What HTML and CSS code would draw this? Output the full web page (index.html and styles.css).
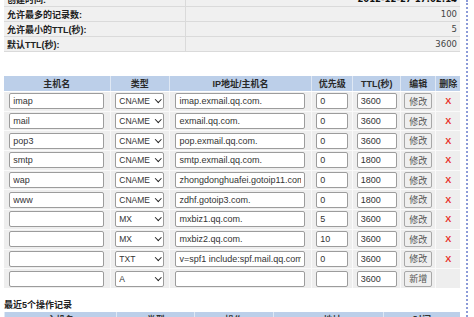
FILE: index.html
```html
<!DOCTYPE html>
<html lang="zh-CN">
<head>
    <meta charset="UTF-8">
    <title>域名解析</title>
    <link rel="stylesheet" href="styles.css">
</head>
<body>
    <div class="page">
        <table class="info">
            <tr><td class="label">创建时间:</td><td class="value date">2012-12-27 17:02:14</td></tr>
            <tr><td class="label">允许最多的记录数:</td><td class="value">100</td></tr>
            <tr><td class="label">允许最小的TTL(秒):</td><td class="value">5</td></tr>
            <tr><td class="label">默认TTL(秒):</td><td class="value">3600</td></tr>
        </table>

        <table class="records">
            <colgroup>
                <col style="width:106px"><col style="width:59px"><col style="width:142px"><col style="width:41px"><col style="width:48px"><col style="width:35px"><col style="width:24px">
            </colgroup>
            <tr>
                <th>主机名</th><th>类型</th><th>IP地址/主机名</th><th>优先级</th><th>TTL(秒)</th><th>编辑</th><th>删除</th>
            </tr>
            <tr>
                <td><input class="host" value="imap"></td>
                <td><span class="pick"><select><option>CNAME</option></select></span></td>
                <td><input class="ip" value="imap.exmail.qq.com."></td>
                <td><input class="pri" value="0"></td>
                <td><input class="ttl" value="3600"></td>
                <td><button>修改</button></td>
                <td><span class="del">X</span></td>
            </tr>
            <tr>
                <td><input class="host" value="mail"></td>
                <td><span class="pick"><select><option>CNAME</option></select></span></td>
                <td><input class="ip" value="exmail.qq.com."></td>
                <td><input class="pri" value="0"></td>
                <td><input class="ttl" value="3600"></td>
                <td><button>修改</button></td>
                <td><span class="del">X</span></td>
            </tr>
            <tr>
                <td><input class="host" value="pop3"></td>
                <td><span class="pick"><select><option>CNAME</option></select></span></td>
                <td><input class="ip" value="pop.exmail.qq.com."></td>
                <td><input class="pri" value="0"></td>
                <td><input class="ttl" value="3600"></td>
                <td><button>修改</button></td>
                <td><span class="del">X</span></td>
            </tr>
            <tr>
                <td><input class="host" value="smtp"></td>
                <td><span class="pick"><select><option>CNAME</option></select></span></td>
                <td><input class="ip" value="smtp.exmail.qq.com."></td>
                <td><input class="pri" value="0"></td>
                <td><input class="ttl" value="1800"></td>
                <td><button>修改</button></td>
                <td><span class="del">X</span></td>
            </tr>
            <tr>
                <td><input class="host" value="wap"></td>
                <td><span class="pick"><select><option>CNAME</option></select></span></td>
                <td><input class="ip" value="zhongdonghuafei.gotoip11.com."></td>
                <td><input class="pri" value="0"></td>
                <td><input class="ttl" value="1800"></td>
                <td><button>修改</button></td>
                <td><span class="del">X</span></td>
            </tr>
            <tr>
                <td><input class="host" value="www"></td>
                <td><span class="pick"><select><option>CNAME</option></select></span></td>
                <td><input class="ip" value="zdhf.gotoip3.com."></td>
                <td><input class="pri" value="0"></td>
                <td><input class="ttl" value="1800"></td>
                <td><button>修改</button></td>
                <td><span class="del">X</span></td>
            </tr>
            <tr>
                <td><input class="host" value=""></td>
                <td><span class="pick"><select><option>MX</option></select></span></td>
                <td><input class="ip" value="mxbiz1.qq.com."></td>
                <td><input class="pri" value="5"></td>
                <td><input class="ttl" value="3600"></td>
                <td><button>修改</button></td>
                <td><span class="del">X</span></td>
            </tr>
            <tr>
                <td><input class="host" value=""></td>
                <td><span class="pick"><select><option>MX</option></select></span></td>
                <td><input class="ip" value="mxbiz2.qq.com."></td>
                <td><input class="pri" value="10"></td>
                <td><input class="ttl" value="3600"></td>
                <td><button>修改</button></td>
                <td><span class="del">X</span></td>
            </tr>
            <tr>
                <td><input class="host" value=""></td>
                <td><span class="pick"><select><option>TXT</option></select></span></td>
                <td><input class="ip" value="v=spf1 include:spf.mail.qq.com ~all"></td>
                <td><input class="pri" value="0"></td>
                <td><input class="ttl" value="3600"></td>
                <td><button>修改</button></td>
                <td><span class="del">X</span></td>
            </tr>
            <tr>
                <td><input class="host" value=""></td>
                <td><span class="pick"><select><option>A</option></select></span></td>
                <td><input class="ip" value=""></td>
                <td><input class="pri" value=""></td>
                <td><input class="ttl" value="3600"></td>
                <td><button>新增</button></td>
                <td></td>
            </tr>
        </table>

        <h3 class="section-title">最近5个操作记录</h3>
        <table class="log">
            <tr><th>主机名</th><th>类型</th><th>操作</th><th>IP地址</th><th>时间</th></tr>
        </table>
    </div>
</body>
</html>
```

FILE: styles.css
```css
* {
    box-sizing: border-box;
}

body {
    margin: 0;
    background: white;
    font-family: "Liberation Sans", "Noto Sans CJK SC", sans-serif;
    font-size: 9px;
    color: #222;
    overflow: hidden;
}

.page {
    width: 468px;
    height: 317px;
    padding-left: 4px;
    border-right: 2px dotted #8c9bd8;
    overflow: hidden;
}

/* domain info */
.info {
    width: 456px;
    margin-top: -9px;
    border-collapse: collapse;
    background: #f0f0f0;
}

.info td {
    height: 15px;
    padding: 0 3px;
    border: 1px solid #dadada;
    border-left: none;
    border-right: none;
}

.info .label {
    width: 181px;
    font-weight: bold;
    border-right: 1px solid #dadada;
}

.info .value {
    text-align: right;
    font-family: "DejaVu Sans", sans-serif;
    font-size: 8.5px;
    color: #444;
}

.info .date {
    font-weight: bold;
    color: #111;
}

/* dns records */
.records {
    width: 456px;
    margin-top: 24px;
    table-layout: fixed;
    border-collapse: collapse;
}

.records th {
    height: 13px;
    background: #bccfe9;
    font-weight: bold;
    color: #2a2a2a;
    border-left: 1px solid #dfe8f4;
    border-bottom: 1px solid #fff;
}

.records th:first-child {
    border-left: none;
}

.records td {
    height: 19.7px;
    padding: 0;
    text-align: center;
    background: #eeeeee;
    border-top: 1px solid #fafafa;
    border-left: 1px solid #fafafa;
}

.records td:first-child {
    border-left: none;
}

input, select, button {
    font-family: "Liberation Sans", "Noto Sans CJK SC", sans-serif;
    font-size: 9px;
    height: 16px;
    vertical-align: middle;
    margin: 0;
}

input {
    padding: 0 3px;
    border: 1px solid #9c9c9c;
    border-radius: 2px;
    background: white;
    color: #333;
}

.host { width: 95px; }
.ip { width: 130px; }
.pri { width: 32px; }
.ttl { width: 40px; }

.pick {
    position: relative;
    display: inline-block;
    vertical-align: middle;
}

/* chevron drawn over the select */
.pick::after {
    content: "";
    position: absolute;
    right: 4px;
    top: 4px;
    width: 3.5px;
    height: 3.5px;
    border-right: 1.6px solid #222;
    border-bottom: 1.6px solid #222;
    transform: rotate(45deg);
    pointer-events: none;
}

select {
    appearance: none;
    -webkit-appearance: none;
    display: block;
    width: 49px;
    padding: 0 3px;
    border: 1px solid #9c9c9c;
    border-radius: 2px;
    background: white;
    color: #333;
    font-size: 8.5px;
}

button {
    width: 28px;
    padding: 0;
    border: 1px solid #a8a8a8;
    border-radius: 2px;
    background: #efefef;
    color: #555;
}

.del {
    color: #e8322a;
    font-weight: bold;
    font-size: 9px;
}

.section-title {
    margin: 12px 0 2px;
    line-height: 10px;
    font-size: 9px;
    font-weight: bold;
    color: #222;
}

.log {
    width: 456px;
    border-collapse: collapse;
}

.log th {
    height: 14px;
    background: #bccfe9;
    font-weight: bold;
    color: #333;
    border-left: 1px solid #dfe8f4;
}
```
